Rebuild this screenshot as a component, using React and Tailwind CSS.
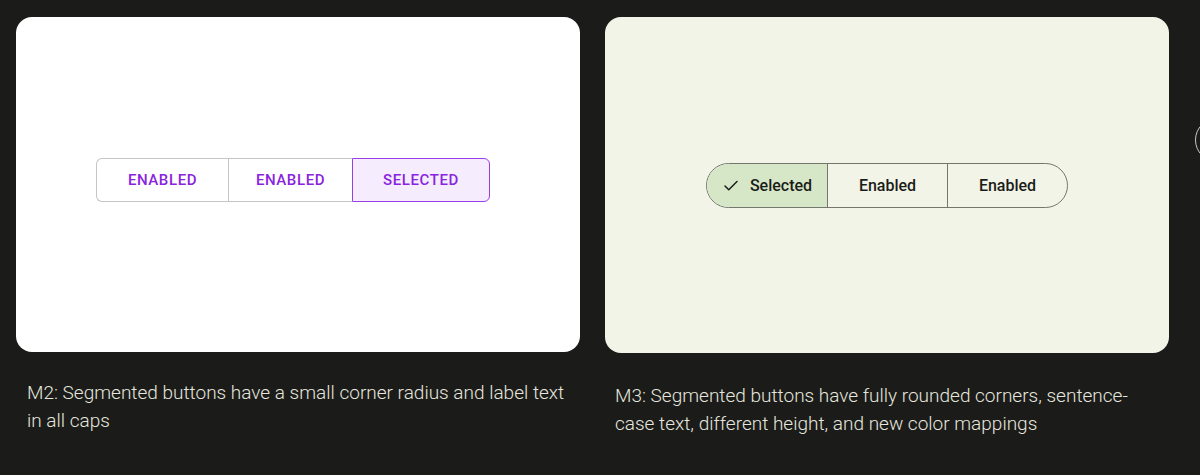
import { Check } from 'lucide-react';

const m2 = [
  { label: 'ENABLED', selected: false, w: 'w-[132px]' },
  { label: 'ENABLED', selected: false, w: 'w-[124px]' },
  { label: 'SELECTED', selected: true, w: 'w-[138px]' },
];

const m3 = [
  { label: 'Selected', selected: true },
  { label: 'Enabled', selected: false },
  { label: 'Enabled', selected: false },
];

export default function App() {
  return (
    <div className="relative h-[475px] w-[1200px] overflow-hidden bg-[#1b1c1a] font-['Roboto',sans-serif]">
      <div className="flex gap-[25px] pl-4 pt-[17px]">
        {/* M2 column */}
        <div className="flex w-[564px] flex-col">
          <div className="flex h-[335px] items-start justify-center rounded-[16px] bg-white pr-[10px] pt-[141px]">
            <div className="flex h-[44px]">
              {m2.map((s, i) => (
                <div
                  key={i}
                  className={`flex ${s.w} items-center justify-center text-[15px] font-medium tracking-[0.04em] text-[#8a24e0] ${
                    s.selected
                      ? 'rounded-r-[6px] border border-[#9b3ee8] bg-[#f5edfd]'
                      : i === 0
                        ? 'rounded-l-[6px] border border-r-0 border-[#c5c4c9]'
                        : 'border border-r-0 border-[#c5c4c9]'
                  }`}
                >
                  {s.label}
                </div>
              ))}
            </div>
          </div>
          <p className="mt-[27px] pl-[11px] pr-1 text-[19px] font-light leading-[28px] text-[#e6e6de]">
            M2: Segmented buttons have a small corner radius and label text in all caps
          </p>
        </div>

        {/* M3 column */}
        <div className="flex w-[564px] flex-col">
          <div className="flex h-[336px] items-start justify-center rounded-[16px] bg-[#f2f4e7] pt-[146px]">
            <div className="flex h-[45px] overflow-hidden rounded-full border border-[#74776d]">
              {m3.map((s, i) => (
                <div
                  key={i}
                  className={`flex w-[120px] items-center justify-center gap-[10px] text-[16px] font-medium text-[#1b1c18] ${
                    i > 0 ? 'border-l border-[#74776d]' : ''
                  } ${s.selected ? 'bg-[#d6e7c8]' : ''}`}
                >
                  {s.selected && <Check size={18} strokeWidth={2} />}
                  {s.label}
                </div>
              ))}
            </div>
          </div>
          <p className="mt-[29px] pl-[10px] pr-4 text-[19px] font-light leading-[28px] text-[#e6e6de]">
            M3: Segmented buttons have fully rounded corners, sentence-case text, different height, and new color mappings
          </p>
        </div>
      </div>

      {/* partially visible carousel control */}
      <div className="absolute left-[1195px] top-[118px] h-[44px] w-[44px] rounded-full border border-[#c7c8c0]" />
    </div>
  );
}
